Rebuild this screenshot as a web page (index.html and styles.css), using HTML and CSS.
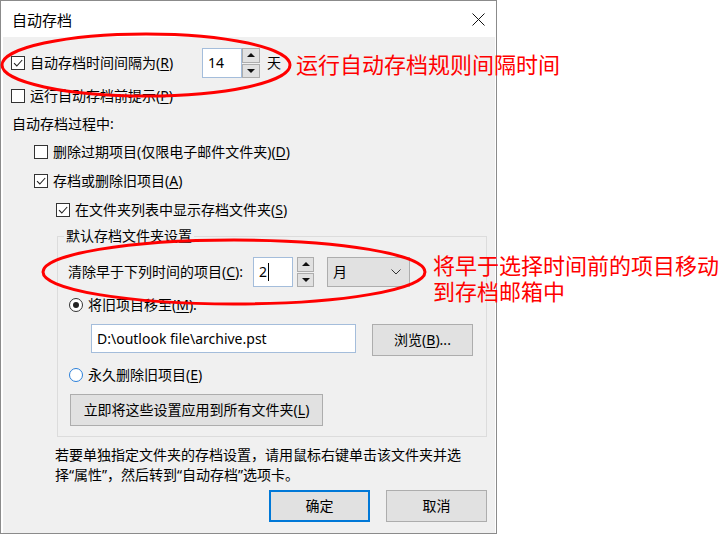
FILE: index.html
```html
<!DOCTYPE html>
<html lang="zh-CN">
<head>
<meta charset="utf-8">
<title>自动存档</title>
<link rel="stylesheet" href="styles.css">
</head>
<body>
<div class="page">
  <div class="dialog">
    <div class="titlebar">
      <span class="title">自动存档</span>
      <svg class="close" viewBox="0 0 13 13"><path d="M0.5 0.5L12.5 12.5M12.5 0.5L0.5 12.5"/></svg>
    </div>
    <div class="content">
      <div class="row r1">
        <span class="cb"><svg viewBox="0 0 12 12"><path d="M2 6.2L4.8 9L10.2 3"/></svg></span>
        <span class="lbl w172">自动存档时间间隔为(<u>R</u>)</span>
        <div class="tb">14</div>
        <div class="spin">
          <div class="sb"><span class="up"></span></div>
          <div class="sb"><span class="down"></span></div>
        </div>
        <span class="unit">天</span>
      </div>
      <div class="row r2">
        <span class="cb"></span>
        <span class="lbl">运行自动存档前提示(<u>P</u>)</span>
      </div>
      <div class="row r3">自动存档过程中:</div>
      <div class="row r4">
        <span class="cb"></span>
        <span class="lbl">删除过期项目(仅限电子邮件文件夹)(<u>D</u>)</span>
      </div>
      <div class="row r5">
        <span class="cb"><svg viewBox="0 0 12 12"><path d="M2 6.2L4.8 9L10.2 3"/></svg></span>
        <span class="lbl">存档或删除旧项目(<u>A</u>)</span>
      </div>
      <div class="row r6">
        <span class="cb"><svg viewBox="0 0 12 12"><path d="M2 6.2L4.8 9L10.2 3"/></svg></span>
        <span class="lbl">在文件夹列表中显示存档文件夹(<u>S</u>)</span>
      </div>
      <fieldset class="group">
        <legend>默认存档文件夹设置</legend>
        <div class="row r7">
          <span class="w185">清除早于下列时间的项目(<u>C</u>):</span>
          <div class="tb">2<span class="caret"></span></div>
          <div class="spin s2">
            <div class="sb"><span class="up"></span></div>
            <div class="sb"><span class="down"></span></div>
          </div>
          <div class="dd">
            <span>月</span>
            <svg viewBox="0 0 10 6"><path d="M0.5 0.5L5 5L9.5 0.5"/></svg>
          </div>
        </div>
        <div class="row r8">
          <span class="radio on"></span>
          <span class="lbl">将旧项目移至(<u>M</u>):</span>
        </div>
        <div class="row r9">
          <div class="path">D:\outlook file\archive.pst</div>
          <div class="btn browse">浏览(<u>B</u>)...</div>
        </div>
        <div class="row r10">
          <span class="radio hover"></span>
          <span class="lbl">永久删除旧项目(<u>E</u>)</span>
        </div>
        <div class="row r11">
          <div class="btn apply">立即将这些设置应用到所有文件夹(<u>L</u>)</div>
        </div>
      </fieldset>
      <p class="note">若要单独指定文件夹的存档设置，请用鼠标右键单击该文件夹并选<br>择“属性”，然后转到“自动存档”选项卡。</p>
      <div class="actions">
        <div class="btn ok">确定</div>
        <div class="btn cancel">取消</div>
      </div>
    </div>
  </div>

  <svg class="marks" viewBox="0 0 728 536">
    <ellipse cx="146" cy="65" rx="144" ry="31"/>
    <ellipse cx="234" cy="272" rx="191" ry="32"/>
  </svg>
  <div class="anno a1">运行自动存档规则间隔时间</div>
  <div class="anno a2">将早于选择时间前的项目移动<br>到存档邮箱中</div>
</div>
</body>
</html>
```

FILE: styles.css
```css
* { box-sizing: border-box; }
html, body { margin: 0; padding: 0; background: #fff; }
body {
  font-family: "Noto Sans", "Noto Sans CJK SC", sans-serif;
  font-size: 14px;
  color: #000;
}
u { text-underline-offset: 2px; }

.page { position: relative; width: 728px; height: 536px; overflow: hidden; }

.dialog {
  width: 497px;
  height: 534px;
  border: 1px solid #8b8b8b;
  background: #fff;
  display: flex;
  flex-direction: column;
}
.titlebar {
  height: 36px;
  flex: none;
  display: flex;
  align-items: center;
  justify-content: space-between;
  padding: 0 11px 0 11px;
  font-size: 15px;
  font-family: "Noto Sans CJK SC", sans-serif;
}
.close { width: 13px; height: 13px; }
.close path { stroke: #111; stroke-width: 1; fill: none; }

.content {
  flex: 1;
  background: #f0f0f0;
  margin: 0 1px 0 2px;
  display: flex;
  flex-direction: column;
}

.row { display: flex; align-items: center; height: 20px; line-height: 20px; white-space: nowrap; }
.lbl { margin-left: 5px; }
.w172 { width: 172px; flex: none; }
.w185 { width: 185px; flex: none; }

.cb {
  width: 14px; height: 14px; flex: none;
  border: 1px solid #333; background: #fff;
  display: flex; align-items: center; justify-content: center;
}
.cb svg { width: 12px; height: 12px; }
.cb path { stroke: #222; stroke-width: 1.1; fill: none; }

.radio {
  width: 14px; height: 14px; flex: none; border-radius: 50%;
  border: 1px solid #333; background: #fff;
  display: flex; align-items: center; justify-content: center;
}
.radio.on::after { content: ""; width: 6px; height: 6px; border-radius: 50%; background: #222; }
.radio.hover { border-color: #2a7fd9; }

.r1 { margin-top: 11px; margin-left: 8px; height: 30px; }
.r2 { margin-top: 8px; margin-left: 8px; }
.r3 { margin-top: 8px; margin-left: 9px; }
.r4 { margin-top: 8px; margin-left: 31px; }
.r5 { margin-top: 9px; margin-left: 31px; }
.r6 { margin-top: 9px; margin-left: 53px; }

.tb {
  width: 40px; height: 30px; flex: none;
  background: #fff; border: 1px solid #a4bddb;
  padding-left: 5px; line-height: 28px;
  display: flex; align-items: center;
}
.caret { width: 1px; height: 18px; background: #000; margin-left: 1px; }
.spin { width: 18px; height: 30px; flex: none; display: flex; flex-direction: column; gap: 1px; }
.spin.s2 { width: 17px; margin-left: 4px; }
.sb {
  flex: 1; background: #e1e1e1; border: 1px solid #adadad;
  display: flex; align-items: center; justify-content: center;
}
.up { width: 0; height: 0; border-left: 4px solid transparent; border-right: 4px solid transparent; border-bottom: 4px solid #111; }
.down { width: 0; height: 0; border-left: 4px solid transparent; border-right: 4px solid transparent; border-top: 4px solid #111; }
.unit { margin-left: 7px; }

.group {
  margin: 6px 0 0 54px;
  width: 430px;
  border: 1px solid #dcdcdc;
  padding: 11px 0 10px 10px;
  min-width: 0;
}
.group legend { padding: 0 2px; margin-left: -4px; line-height: 20px; font-size: 14px; }

.r7 { height: 30px; }
.dd {
  width: 83px; height: 30px; margin-left: 13px; flex: none;
  background: #e1e1e1; border: 1px solid #adadad;
  display: flex; align-items: center; justify-content: space-between;
  padding: 0 8px 0 5px;
}
.dd svg { width: 10px; height: 6px; }
.dd path { stroke: #333; stroke-width: 1; fill: none; }
.r8 { margin-top: 8px; margin-left: 1px; }
.r9 { margin-top: 9px; margin-left: 23px; height: 32px; align-items: flex-start; }
.path {
  width: 265px; height: 29px; background: #fff; border: 1px solid #a4bddb;
  padding-left: 5px; line-height: 27px;
}
.btn {
  background: #e1e1e1; border: 1px solid #adadad;
  display: flex; align-items: center; justify-content: center;
  height: 32px; line-height: 20px;
}
.browse { width: 101px; margin-left: 16px; }
.r10 { margin-top: 9px; margin-left: 1px; }
.r11 { margin-top: 9px; margin-left: 2px; height: 32px; }
.apply { width: 253px; }

.note { margin: 8px 0 0 52px; line-height: 20px; white-space: nowrap; }
.actions { margin-top: 5px; display: flex; justify-content: flex-end; gap: 16px; padding-right: 8px; }
.ok { width: 101px; border: 2px solid #0078d7; }
.cancel { width: 101px; }

.marks { position: absolute; left: 0; top: 0; width: 728px; height: 536px; pointer-events: none; }
.marks ellipse { fill: none; stroke: #f00; stroke-width: 3; }
.anno {
  position: absolute;
  color: #f00;
  font-family: "Noto Sans CJK SC", sans-serif;
  font-size: 22px;
  line-height: 26px;
  white-space: nowrap;
}
.a1 { left: 296px; top: 50px; }
.a2 { left: 433px; top: 251px; }
```
